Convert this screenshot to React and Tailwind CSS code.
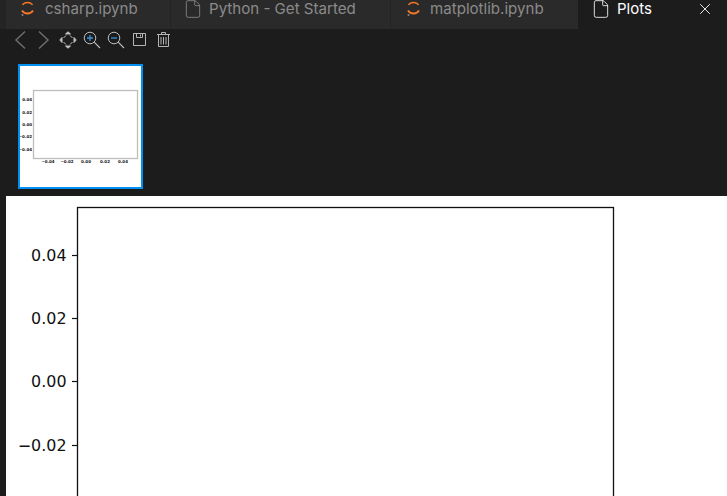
import { File, X } from 'lucide-react';

const TICKS = [
  { label: '0.04', y: 255 },
  { label: '0.02', y: 318 },
  { label: '0.00', y: 381 },
  { label: '\u22120.02', y: 445 },
];

const THUMB_Y = [
  { label: '0.04', y: 99 },
  { label: '0.02', y: 112 },
  { label: '0.00', y: 124 },
  { label: '\u22120.02', y: 136 },
  { label: '\u22120.04', y: 149 },
];

const THUMB_X = [
  { label: '\u22120.04', x: 48 },
  { label: '\u22120.02', x: 67 },
  { label: '0.00', x: 86 },
  { label: '0.02', x: 105 },
  { label: '0.04', x: 123 },
];

function NotebookIcon() {
  return (
    <svg width="16" height="18" viewBox="0 0 16 18" fill="none" className="shrink-0">
      <path d="M2.5 5 C4.5 1.5 10.5 1.5 12.5 5" stroke="#f37726" strokeWidth="1.5" />
      <path d="M2 10.5 C4.5 14.5 10.5 14.5 13 10.5" stroke="#f37726" strokeWidth="1.9" />
      <circle cx="2.5" cy="15" r="1" fill="#8a8a8a" />
    </svg>
  );
}

function Tab({ icon, label, width, divider }) {
  return (
    <div
      className={`flex items-center h-full pb-[12px] shrink-0 bg-[#2a2a2a] text-[#8a8a8a] ${width} ${divider ? 'border-r border-[#232323]' : ''}`}
    >
      {icon}
      <span className="text-[15.1px] leading-none whitespace-nowrap">{label}</span>
    </div>
  );
}

function Toolbar() {
  return (
    <div className="flex items-center h-[22px] pl-[14px] shrink-0">
      <svg width="12" height="20" viewBox="0 0 12 20" fill="none" className="shrink-0">
        <path d="M11 1.5 L2 10 L11 18.5" stroke="#6e6e6e" strokeWidth="1.5" />
      </svg>
      <svg width="12" height="20" viewBox="0 0 12 20" fill="none" className="ml-[12px] shrink-0">
        <path d="M1 1.5 L10 10 L1 18.5" stroke="#6e6e6e" strokeWidth="1.5" />
      </svg>
      <svg width="18" height="18" viewBox="0 0 18 18" fill="none" stroke="#c0c0c0" strokeWidth="1" className="ml-[9px] shrink-0">
        <path d="M6.5 3 L9 0.8 L11.5 3 Z M6.5 15 L9 17.2 L11.5 15 Z M3 6.5 L0.8 9 L3 11.5 Z M15 6.5 L17.2 9 L15 11.5 Z" fill="#c0c0c0" />
        <path d="M7 4.5 L4.5 7 M11 4.5 L13.5 7 M7 13.5 L4.5 11 M11 13.5 L13.5 11" />
      </svg>
      <svg width="18" height="18" viewBox="0 0 18 18" fill="none" className="ml-[6px] shrink-0">
        <circle cx="7" cy="7" r="5.8" stroke="#bdbdbd" strokeWidth="1" />
        <path d="M11.2 11.2 L17 17" stroke="#bdbdbd" strokeWidth="1.1" />
        <path d="M4 7 H10 M7 4 V10" stroke="#3794e0" strokeWidth="1.3" />
      </svg>
      <svg width="18" height="18" viewBox="0 0 18 18" fill="none" className="ml-[6px] shrink-0">
        <circle cx="7" cy="7" r="5.8" stroke="#bdbdbd" strokeWidth="1" />
        <path d="M11.2 11.2 L17 17" stroke="#bdbdbd" strokeWidth="1.1" />
        <path d="M4 7 H10" stroke="#3794e0" strokeWidth="1.3" />
      </svg>
      <svg width="13" height="13" viewBox="0 0 13 13" fill="none" stroke="#b5b5b5" strokeWidth="1" className="ml-[8px] mb-[2px] shrink-0">
        <path d="M0.5 0.5 H12.5 V12.5 H0.5 Z" />
        <path d="M3.5 0.5 V4.5 H9.5 V0.5 M7.5 1.5 V3.5" />
      </svg>
      <svg width="13" height="15" viewBox="0 0 13 15" fill="none" stroke="#b5b5b5" strokeWidth="1" className="ml-[11px] mb-[1px] shrink-0">
        <path d="M0 2.5 H13 M4.5 2.5 V0.5 H8.5 V2.5" />
        <path d="M1.5 2.5 V14.5 H11.5 V2.5" />
        <path d="M4 5 V12.5 M6.5 5 V12.5 M9 5 V12.5" />
      </svg>
    </div>
  );
}

function Thumbnail() {
  return (
    <svg width="121" height="121" viewBox="20 66 121 121" className="block">
      <rect x="33.5" y="90.5" width="104" height="68" fill="#fff" stroke="#bdbdbd" strokeWidth="1.3" />
      {THUMB_Y.map((t) => (
        <text key={t.y} x="32" y={t.y + 1.5} textAnchor="end" fontSize="4" fontWeight="700" fill="#111" fontFamily="DejaVu Sans, sans-serif">
          {t.label}
        </text>
      ))}
      {THUMB_X.map((t) => (
        <text key={t.x} x={t.x} y="162.5" textAnchor="middle" fontSize="4" fontWeight="700" fill="#111" fontFamily="DejaVu Sans, sans-serif">
          {t.label}
        </text>
      ))}
    </svg>
  );
}

function Plot() {
  return (
    <svg width="721" height="300" viewBox="6 196 721 300" className="block">
      <rect x="77.5" y="207.5" width="536" height="320" fill="#fff" stroke="#111" strokeWidth="1.3" />
      {TICKS.map((t) => (
        <g key={t.y}>
          <line x1="72" x2="77" y1={t.y + 0.5} y2={t.y + 0.5} stroke="#111" strokeWidth="1.2" />
          <text x="66.5" y={t.y + 6} textAnchor="end" fontSize="15.9" fill="#111" fontFamily="DejaVu Sans, sans-serif">
            {t.label}
          </text>
        </g>
      ))}
    </svg>
  );
}

export default function App() {
  return (
    <div className="flex flex-col w-[727px] h-[496px] overflow-hidden bg-[#1c1c1c] font-['Inter',sans-serif]">
      {/* Tab bar */}
      <div className="flex h-[29px] pl-[6px] bg-[#242424] shrink-0">
        <Tab width="w-[165px]" divider label="csharp.ipynb" icon={<span className="ml-[14px] mr-[9px] flex"><NotebookIcon /></span>} />
        <Tab width="w-[220px]" divider label="Python - Get Started" icon={<File size={20} strokeWidth={1} className="ml-[12px] mr-[6px] shrink-0" />} />
        <Tab width="w-[187px]" label="matplotlib.ipynb" icon={<span className="ml-[15px] mr-[8px] flex"><NotebookIcon /></span>} />
        <div className="flex items-center flex-1 pb-[12px] bg-[#1c1c1c] text-white">
          <File size={20} strokeWidth={1} className="ml-[13px] mr-[6px] shrink-0" />
          <span className="text-[15px] leading-none">Plots</span>
          <X size={18} strokeWidth={1.2} className="ml-auto mr-[13px]" />
        </div>
      </div>

      <div className="flex flex-col h-[167px] shrink-0">
        <Toolbar />
        {/* Plot history thumbnail */}
        <div className="pl-[18px] pt-[13px]">
          <div className="w-[125px] h-[125px] border-2 border-[#0090f1] bg-white">
            <Thumbnail />
          </div>
        </div>
      </div>

      {/* Selected plot */}
      <div className="flex-1 ml-[6px] bg-white overflow-hidden">
        <Plot />
      </div>
    </div>
  );
}
